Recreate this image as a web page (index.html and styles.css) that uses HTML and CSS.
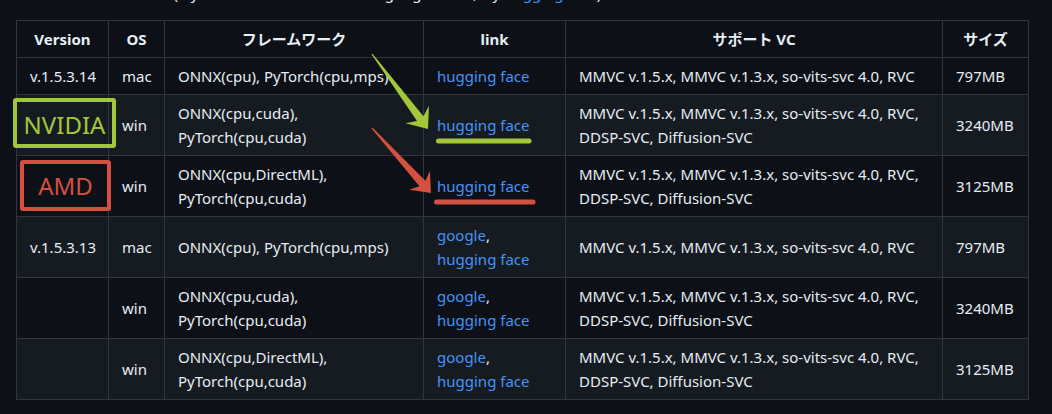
FILE: index.html
```html
<!DOCTYPE html>
<html lang="ja">
<head>
<meta charset="utf-8">
<title>Downloads</title>
<link rel="stylesheet" href="styles.css">
</head>
<body>
<div class="page">
  <p class="intro">Download links below (if you cannot download from google drive, try <a href="#">hugging face</a>)</p>
  <table class="dl">
    <colgroup>
      <col class="c-ver"><col class="c-os"><col class="c-fw"><col class="c-link"><col class="c-vc"><col class="c-size">
    </colgroup>
    <thead>
      <tr><th>Version</th><th>OS</th><th>フレームワーク</th><th>link</th><th>サポート VC</th><th>サイズ</th></tr>
    </thead>
    <tbody>
      <tr>
        <td>v.1.5.3.14</td><td>mac</td><td>ONNX(cpu), PyTorch(cpu,mps)</td>
        <td><a href="#">hugging face</a></td>
        <td>MMVC v.1.5.x, MMVC v.1.3.x, so-vits-svc 4.0, RVC</td><td>797MB</td>
      </tr>
      <tr>
        <td></td><td>win</td><td>ONNX(cpu,cuda),<br>PyTorch(cpu,cuda)</td>
        <td><a href="#">hugging face</a></td>
        <td>MMVC v.1.5.x, MMVC v.1.3.x, so-vits-svc 4.0, RVC,<br>DDSP-SVC, Diffusion-SVC</td><td>3240MB</td>
      </tr>
      <tr>
        <td></td><td>win</td><td>ONNX(cpu,DirectML),<br>PyTorch(cpu,cuda)</td>
        <td><a href="#">hugging face</a></td>
        <td>MMVC v.1.5.x, MMVC v.1.3.x, so-vits-svc 4.0, RVC,<br>DDSP-SVC, Diffusion-SVC</td><td>3125MB</td>
      </tr>
      <tr>
        <td>v.1.5.3.13</td><td>mac</td><td>ONNX(cpu), PyTorch(cpu,mps)</td>
        <td><a href="#">google</a>,<br><a href="#">hugging face</a></td>
        <td>MMVC v.1.5.x, MMVC v.1.3.x, so-vits-svc 4.0, RVC</td><td>797MB</td>
      </tr>
      <tr>
        <td></td><td>win</td><td>ONNX(cpu,cuda),<br>PyTorch(cpu,cuda)</td>
        <td><a href="#">google</a>,<br><a href="#">hugging face</a></td>
        <td>MMVC v.1.5.x, MMVC v.1.3.x, so-vits-svc 4.0, RVC,<br>DDSP-SVC, Diffusion-SVC</td><td>3240MB</td>
      </tr>
      <tr>
        <td></td><td>win</td><td>ONNX(cpu,DirectML),<br>PyTorch(cpu,cuda)</td>
        <td><a href="#">google</a>,<br><a href="#">hugging face</a></td>
        <td>MMVC v.1.5.x, MMVC v.1.3.x, so-vits-svc 4.0, RVC,<br>DDSP-SVC, Diffusion-SVC</td><td>3125MB</td>
      </tr>
    </tbody>
  </table>

  <div class="tag tag-nvidia">NVIDIA</div>
  <div class="tag tag-amd">AMD</div>

  <svg class="marks" width="1052" height="414" viewBox="0 0 1052 414" aria-hidden="true">
    <polygon class="mk-green" transform="translate(372 54) rotate(53.25)"
      points="0,-0.6 80.6,-4 75.6,-14.7 93.6,0 75.6,14.7 80.6,4 0,0.6"/>
    <polygon class="mk-red" transform="translate(372 128) rotate(47.77)"
      points="0,-0.6 75,-4 70.8,-14 87.8,0 70.8,14 75,4 0,0.6"/>
    <line class="ul-green" x1="438.5" y1="141" x2="529" y2="141"/>
    <line class="ul-red" x1="436.5" y1="202" x2="533" y2="202"/>
  </svg>
</div>
</body>
</html>
```
FILE: styles.css
```css
html, body {
  margin: 0;
  background: #0d1117;
}

body {
  font-family: "Noto Sans", "Noto Sans CJK JP", sans-serif;
  font-size: 15px;
  line-height: 24px;
  color: #e6edf3;
}

.page {
  position: relative;
  display: flow-root;
  height: 414px;
  overflow: hidden;
  padding: 0 16px;
}

.intro {
  margin: -19px 0 15px;
  white-space: nowrap;
}

a {
  color: #4493f8;
  text-decoration: none;
}

.dl {
  border-collapse: collapse;
  table-layout: fixed;
  width: 1012px;
}

.c-ver { width: 92px; }
.c-os { width: 56px; }
.c-fw { width: 259px; }
.c-link { width: 142px; }
.c-vc { width: 377px; }
.c-size { width: 86px; }

.dl th,
.dl td {
  border: 1px solid #30363d;
  padding: 6px 13px;
  white-space: nowrap;
}

.dl th {
  font-weight: 700;
  text-align: center;
}

.dl td {
  text-align: left;
}

.dl tbody tr:nth-child(2n) {
  background: #161b22;
}

.tag {
  position: absolute;
  box-sizing: border-box;
  border: 4px solid currentColor;
  border-radius: 3px;
  display: flex;
  align-items: center;
  justify-content: center;
  font-size: 24px;
  line-height: 1;
}

.tag-nvidia {
  left: 13px;
  top: 98px;
  width: 103px;
  height: 50px;
  padding-top: 4px;
  color: #a3c73a;
}

.tag-amd {
  left: 20px;
  top: 160px;
  width: 91px;
  height: 51px;
  color: #d4503f;
}

.marks {
  position: absolute;
  left: 0;
  top: 0;
  pointer-events: none;
}

.mk-green { fill: #a3c73a; }
.mk-red { fill: #d4503f; }

.ul-green,
.ul-red {
  stroke-width: 5;
  stroke-linecap: round;
}

.ul-green { stroke: #a3c73a; }
.ul-red { stroke: #d4503f; }
```
